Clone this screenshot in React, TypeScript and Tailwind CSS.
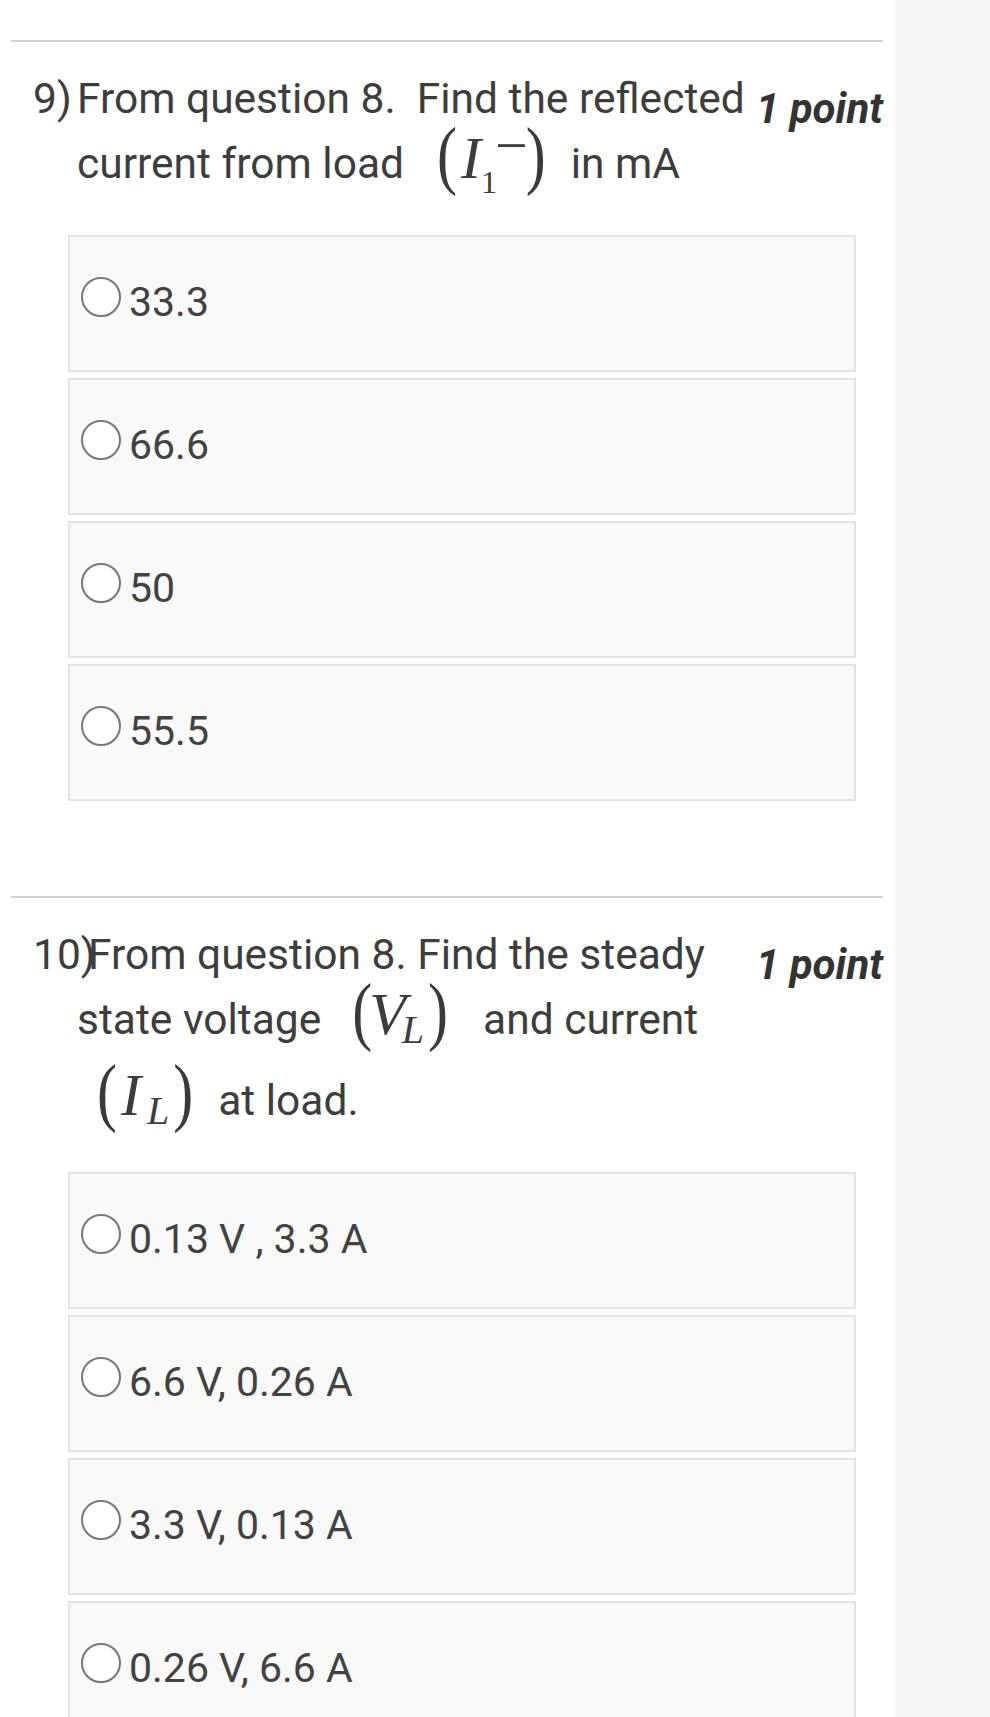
import React from "react";

const serif = "font-['Liberation_Serif','Times_New_Roman',serif]";

function Paren({ c, className = "" }: { c: string; className?: string }) {
  return <span className={`${serif} inline-block origin-center scale-y-[1.27] align-[3px] text-[60px] leading-[0] text-[#3a3a3a] ${className}`}>{c}</span>;
}

function Option({ label }: { label: string }) {
  return (
    <div className="flex h-[137px] items-start gap-[8px] border-2 border-[#e3e3e3] bg-[#f9f9f9] pl-[11px] pt-[40px]">
      <span className="h-[40px] w-[40px] shrink-0 rounded-full border-2 border-[#777777] bg-white" />
      <span className="mt-[5px] whitespace-nowrap text-[41px] leading-[41px] text-[#424242]">{label}</span>
    </div>
  );
}

function Question({ num, lines, options, first }: { num: string; lines: { h: string; body: React.ReactNode }[]; options: string[]; first?: boolean }) {
  return (
    <section className={first ? "pt-[40px]" : "pt-[95px]"}>
      <div className="h-[2px] bg-[#d2d2d2]" />
      <div className="flex pt-[24px] text-[#3d3d3d]">
        <div className="ml-[22px] w-[44px] shrink-0 whitespace-nowrap text-[42.5px] leading-[65px]">{num}</div>
        <div className="min-w-0 flex-1 text-[42.5px]">
          {lines.map((l, i) => (
            <div key={i} className={`${l.h} whitespace-nowrap leading-[65px]`}>{l.body}</div>
          ))}
        </div>
        <div className="shrink-0 whitespace-nowrap pt-[10px] text-[42px] font-bold italic leading-[65px] text-[#333333]">1 point</div>
      </div>
      <div className="ml-[57px] mr-[27px] mt-[39px] flex flex-col gap-[6px]">
        {options.map((o) => <Option key={o} label={o} />)}
      </div>
    </section>
  );
}

export default function App() {
  return (
    <div className="flex min-h-[1717px] w-[990px] bg-white font-['Roboto','Liberation_Sans',sans-serif]">
      <main className="w-[895px] shrink-0 pl-[11px] pr-[12px]">
        <Question
          first
          num="9)"
          lines={[
            { h: "h-[65px]", body: <>From question 8.{"\u00a0"} Find the reflected</> },
            {
              h: "h-[65px]",
              body: (
                <>
                  current from load
                  <span className="ml-[33px] mr-[25px]">
                    <Paren c="(" />
                    <span className={`${serif} ml-[4px] italic text-[60px] leading-[0]`}>I</span>
                    <span className={`${serif} text-[32px] leading-[0] align-[-15px]`}>1</span>
                    <span className={`${serif} ml-[-2px] text-[58px] leading-[0] align-[13px]`}>−</span>
                    <Paren c=")" className="ml-[-2px]" />
                  </span>
                  in mA
                </>
              ),
            },
          ]}
          options={["33.3", "66.6", "50", "55.5"]}
        />
        <Question
          num="10)"
          lines={[
            { h: "h-[65px] pl-[11px]", body: <>From question 8. Find the steady</> },
            {
              h: "h-[81px]",
              body: (
                <>
                  state voltage
                  <span className="ml-[31px] mr-[35px]">
                    <Paren c="(" />
                    <span className={`${serif} ml-[-3px] mr-[-4px] italic text-[60px] leading-[0]`}>V</span>
                    <span className={`${serif} italic text-[40px] leading-[0] align-[-9px]`}>L</span>
                    <Paren c=")" className="ml-[4px]" />
                  </span>
                  and current
                </>
              ),
            },
            {
              h: "h-[65px]",
              body: (
                <>
                  <span className="ml-[20px] mr-[25px]">
                    <Paren c="(" />
                    <span className={`${serif} ml-[4px] italic text-[60px] leading-[0]`}>I</span>
                    <span className={`${serif} ml-[6px] italic text-[40px] leading-[0] align-[-9px]`}>L</span>
                    <Paren c=")" className="ml-[4px]" />
                  </span>
                  at load.
                </>
              ),
            },
          ]}
          options={["0.13 V , 3.3 A", "6.6 V, 0.26 A", "3.3 V, 0.13 A", "0.26 V, 6.6 A"]}
        />
      </main>
      <aside className="flex-1 bg-[#f8f8f8]" />
    </div>
  );
}
